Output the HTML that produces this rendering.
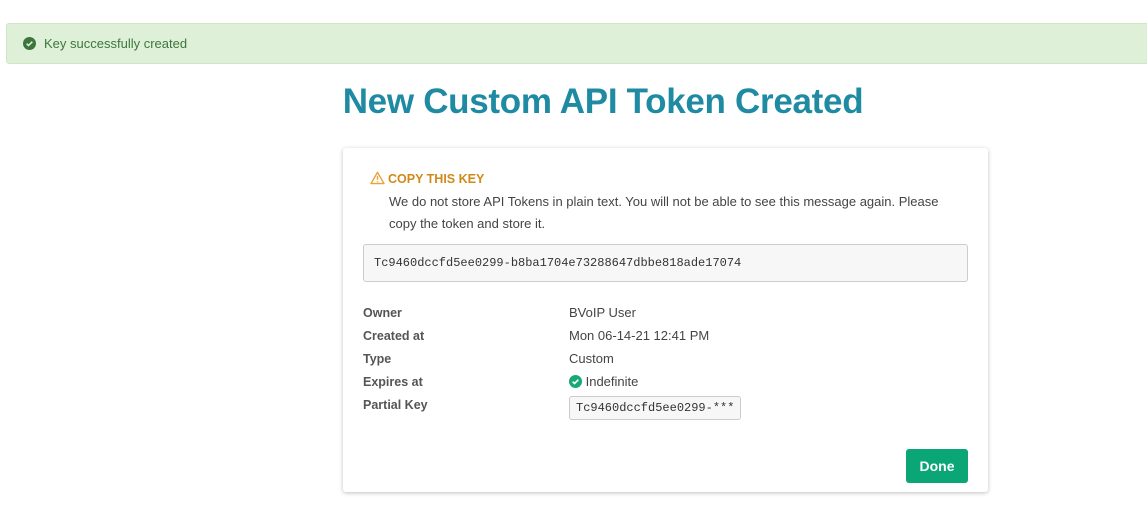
<!DOCTYPE html>
<html><head><style>
body{margin:0;width:1147px;height:507px;background:#fff;font-family:"Liberation Sans",sans-serif;position:relative;overflow:hidden;color:#333}
.alert{position:absolute;left:6px;top:23px;width:1146px;height:41px;background:#dff0d8;border:1px solid #cfe6c6;border-radius:3px;box-sizing:border-box}
.alert span{position:absolute;left:37px;top:12px;font-size:13px;color:#3c763d}
.alert svg{position:absolute;left:16px;top:13px}
h1{position:absolute;left:0;width:1206px;text-align:center;top:82px;margin:0;font-size:35px;font-weight:bold;color:#1f8ba3;letter-spacing:-0.3px}
.card{position:absolute;left:343px;top:148px;width:645px;height:344px;background:#fff;border-radius:3px;box-shadow:0 1px 4px rgba(0,0,0,.25)}
.warn{position:absolute;left:27px;top:24px;font-size:12.5px;color:#d08a1a;font-weight:bold}
.warn svg{position:absolute;left:0;top:-1px}
.warn b{position:absolute;left:18px;white-space:nowrap}
.msg{position:absolute;left:46px;top:43px;width:580px;font-size:13px;line-height:22px;color:#444}
.tok{position:absolute;left:20px;top:96px;width:605px;height:38px;box-sizing:border-box;border:1px solid #ccc;border-radius:3px;background:#f7f7f7;font-family:"Liberation Mono",monospace;font-size:12px;padding:11px 10px;color:#333}
.row{position:absolute;left:20px;font-size:12.5px;color:#555;font-weight:bold;margin-top:1px}
.val{position:absolute;left:226px;font-size:13px;color:#444}
.pk{position:absolute;left:226px;top:248px;border:1px solid #ccc;border-radius:3px;background:#f7f7f7;font-family:"Liberation Mono",monospace;font-size:12px;padding:4px 6px;color:#333}
.done{position:absolute;left:563px;top:301px;width:62px;height:34px;background:#0aa676;border-radius:3px;color:#fff;font-weight:bold;font-size:14px;text-align:center;line-height:34px}
</style></head><body>
<div class="alert"><svg width="13" height="13" viewBox="0 0 16 16"><circle cx="8" cy="8" r="8" fill="#3c763d"/><path d="M4.5 8.2l2.3 2.3 4.7-4.7" stroke="#dff0d8" stroke-width="2" fill="none"/></svg><span>Key successfully created</span></div>
<h1>New Custom API Token Created</h1>
<div class="card">
<div class="warn"><svg width="15" height="14" viewBox="0 0 16 15"><path d="M8 1.5L1 13.5h14z" fill="none" stroke="#e8a33a" stroke-width="1.5" stroke-linejoin="round"/><path d="M8 5.5v4M8 11v1.2" stroke="#e8a33a" stroke-width="1.5"/></svg><b>COPY THIS KEY</b></div>
<div class="msg">We do not store API Tokens in plain text. You will not be able to see this message again. Please copy the token and store it.</div>
<div class="tok">Tc9460dccfd5ee0299-b8ba1704e73288647dbbe818ade17074</div>
<div class="row" style="top:157px">Owner</div><div class="val" style="top:157px">BVoIP User</div>
<div class="row" style="top:180px">Created at</div><div class="val" style="top:180px">Mon 06-14-21 12:41 PM</div>
<div class="row" style="top:203px">Type</div><div class="val" style="top:203px">Custom</div>
<div class="row" style="top:226px">Expires at</div><div class="val" style="top:226px"><svg width="13" height="13" viewBox="0 0 16 16" style="vertical-align:-2px"><circle cx="8" cy="8" r="8" fill="#18a874"/><path d="M4.5 8.2l2.3 2.3 4.7-4.7" stroke="#fff" stroke-width="2" fill="none"/></svg> Indefinite</div>
<div class="row" style="top:249px">Partial Key</div>
<div class="pk">Tc9460dccfd5ee0299-***</div>
<div class="done">Done</div>
</div>
</body></html>
